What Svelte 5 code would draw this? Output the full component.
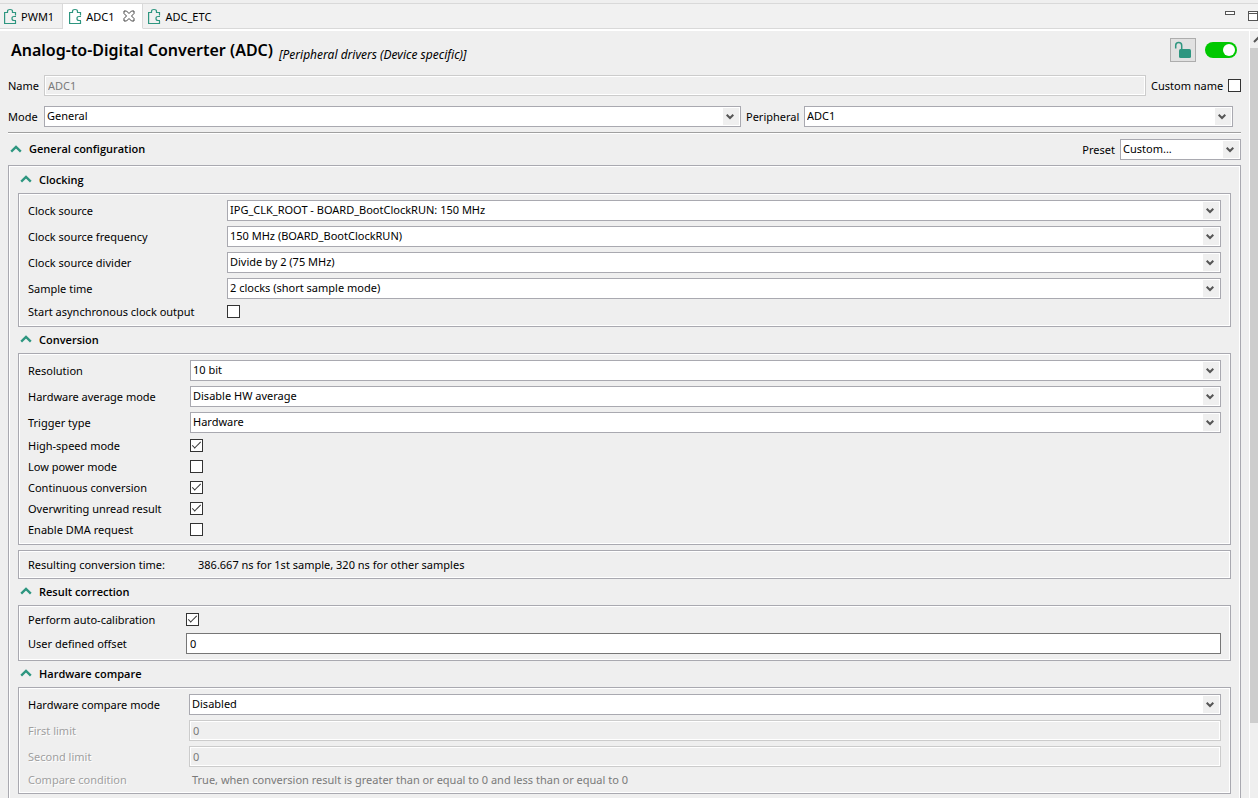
<script>
  let tabs = $state([
    { id: 'PWM1', label: 'PWM1' },
    { id: 'ADC1', label: 'ADC1' },
    { id: 'ADC_ETC', label: 'ADC_ETC' }
  ]);
  let activeTab = $state('ADC1');
  let enabled = $state(true);
  let customName = $state(false);

  const presets = ['Custom...'];

  let sections = $state([
    {
      title: 'Clocking',
      labelWidth: 199,
      open: true,
      rows: [
        { id: 'clock-source', label: 'Clock source', kind: 'select', value: 'IPG_CLK_ROOT - BOARD_BootClockRUN: 150 MHz' },
        { id: 'clock-freq', label: 'Clock source frequency', kind: 'select', value: '150 MHz (BOARD_BootClockRUN)' },
        { id: 'clock-div', label: 'Clock source divider', kind: 'select', value: 'Divide by 2 (75 MHz)' },
        { id: 'sample-time', label: 'Sample time', kind: 'select', value: '2 clocks (short sample mode)' },
        { id: 'async-out', label: 'Start asynchronous clock output', kind: 'check', value: false }
      ]
    },
    {
      title: 'Conversion',
      labelWidth: 162,
      open: true,
      rows: [
        { id: 'resolution', label: 'Resolution', kind: 'select', value: '10 bit' },
        { id: 'hw-average', label: 'Hardware average mode', kind: 'select', value: 'Disable HW average' },
        { id: 'trigger', label: 'Trigger type', kind: 'select', value: 'Hardware' },
        { id: 'high-speed', label: 'High-speed mode', kind: 'check', value: true },
        { id: 'low-power', label: 'Low power mode', kind: 'check', value: false },
        { id: 'continuous', label: 'Continuous conversion', kind: 'check', value: true },
        { id: 'overwrite', label: 'Overwriting unread result', kind: 'check', value: true },
        { id: 'dma', label: 'Enable DMA request', kind: 'check', value: false }
      ]
    },
    {
      labelWidth: 167,
      open: true,
      rows: [
        { id: 'conv-time', label: 'Resulting conversion time:', kind: 'text', value: '386.667 ns for 1st sample, 320 ns for other samples' }
      ]
    },
    {
      title: 'Result correction',
      labelWidth: 158,
      open: true,
      rows: [
        { id: 'auto-cal', label: 'Perform auto-calibration', kind: 'check', value: true },
        { id: 'offset', label: 'User defined offset', kind: 'input', value: '0' }
      ]
    },
    {
      title: 'Hardware compare',
      labelWidth: 161,
      open: true,
      rows: [
        { id: 'hw-compare', label: 'Hardware compare mode', kind: 'select', value: 'Disabled' },
        { id: 'limit-1', label: 'First limit', kind: 'input', value: '0', disabled: true },
        { id: 'limit-2', label: 'Second limit', kind: 'input', value: '0', disabled: true },
        { id: 'condition', label: 'Compare condition', kind: 'text', value: 'True, when conversion result is greater than or equal to 0 and less than or equal to 0', disabled: true }
      ]
    }
  ]);
  let generalOpen = $state(true);
</script>

{#snippet combo(id, value)}
  <div class="combo">
    <select {id}>
      <option>{value}</option>
    </select>
    <span class="combo-arrow">
      <svg width="8" height="6" viewBox="0 0 8 6"><path d="M0.7 0.7 4 4 7.3 0.7" fill="none" stroke="#555" stroke-width="2" /></svg>
    </span>
  </div>
{/snippet}

{#snippet chevron(open)}
  <svg class="chevron" class:closed={!open} width="12" height="8" viewBox="0 0 12 8"><path d="M1.2 6.6 6 2l4.8 4.6" fill="none" stroke="#2e9680" stroke-width="2.4" /></svg>
{/snippet}

<div class="editor">
  <div class="tabbar">
    <div class="tabs" role="tablist">
      {#each tabs as tab (tab.id)}
        <div class="tab" class:active={tab.id === activeTab}>
          <button class="tab-name" role="tab" aria-selected={tab.id === activeTab} onclick={() => (activeTab = tab.id)}>
            <svg width="13" height="17" viewBox="0 0 13 17" fill="none" stroke="#2e9680" stroke-width="1.2">
              <path d="M11.5 7.5V4.5H8.5V3.5q0-2-2.5-2t-2.5 2v1H.6v11h10.9v-2.5" />
              <path d="M12 8.5H10q-2 0-2 2t2 2h2" />
            </svg>
            <span>{tab.label}</span>
          </button>
          {#if tab.id === activeTab}
            <button class="tab-close" aria-label="Close tab">
              <svg width="12" height="12" viewBox="0 0 12 12" fill="#fff" stroke="#444"><path d="M1 1h2.5L6 3.5 8.5 1H11v2.5L8.500 6 11 8.5V11H8.5L6 8.5 3.5 11H1V8.5L3.5 6 1 3.5z" /></svg>
            </button>
          {/if}
        </div>
      {/each}
    </div>
    <div class="window-buttons">
      <button aria-label="Minimize">
        <svg width="10" height="10" viewBox="0 0 10 10" fill="#fff" stroke="#555"><rect x=".5" y=".5" width="9" height="3" /></svg>
      </button>
      <button aria-label="Maximize">
        <svg width="10" height="10" viewBox="0 0 10 10" fill="#fff" stroke="#555"><rect x=".5" y=".5" width="9" height="9" /><path d="M0 2.5h10" /></svg>
      </button>
    </div>
  </div>

  <div class="body">
    <main>
      <header>
        <h1>Analog-to-Digital Converter (ADC)</h1>
        <em>[Peripheral drivers (Device specific)]</em>
        <button class="lock" aria-label="Unlock">
          <svg width="18" height="18" viewBox="0 0 18 18"><path d="M1.7 7.5V4.5a3 3 0 0 1 6 0V8" fill="none" stroke="#2e9680" stroke-width="1.5" /><rect x="5" y="8" width="12" height="9" rx="1.5" fill="#2e9680" /></svg>
        </button>
        <label class="toggle">
          <input type="checkbox" aria-label="Enabled" bind:checked={enabled} />
        </label>
      </header>

      <div class="line">
        <label class="lead" for="name">Name</label>
        <input id="name" class="field" type="text" value="ADC1" disabled={!customName} />
        <label class="custom" for="custom-name">Custom name</label>
        <input id="custom-name" class="check" type="checkbox" bind:checked={customName} />
      </div>

      <div class="line mode">
        <label class="lead" for="mode">Mode</label>
        <div class="mode-combo">{@render combo('mode', 'General')}</div>
        <label class="peripheral" for="peripheral">Peripheral</label>
        <div class="peripheral-combo">{@render combo('peripheral', 'ADC1')}</div>
      </div>

      <hr />

      <div class="line general">
        <button class="heading" aria-expanded={generalOpen} onclick={() => (generalOpen = !generalOpen)}>
          {@render chevron(generalOpen)}
          General configuration
        </button>
        <label class="preset" for="preset">Preset</label>
        <div class="preset-combo">{@render combo('preset', presets[0])}</div>
      </div>

      {#if generalOpen}
        <div class="group outer">
          {#each sections as section}
            {#if section.title}
              <button class="heading" aria-expanded={section.open} onclick={() => (section.open = !section.open)}>
                {@render chevron(section.open)}
                {section.title}
              </button>
            {/if}
            {#if section.open}
              <div class="group" class:untitled={!section.title} style="--label-width: {section.labelWidth}px">
                {#each section.rows as row (row.id)}
                  <div class="row {row.kind}" class:disabled={row.disabled}>
                    {#if row.kind === 'text'}
                      <span class="name">{row.label}</span>
                      <output>{row.value}</output>
                    {:else}
                      <label class="name" for={row.id}>{row.label}</label>
                      {#if row.kind === 'select'}
                        {@render combo(row.id, row.value)}
                      {:else if row.kind === 'check'}
                        <input id={row.id} class="check" type="checkbox" bind:checked={row.value} />
                      {:else}
                        <input id={row.id} class="field" type="text" bind:value={row.value} disabled={row.disabled} />
                      {/if}
                    {/if}
                  </div>
                {/each}
              </div>
            {/if}
          {/each}
        </div>
      {/if}
    </main>

    <div class="scrollbar" aria-hidden="true">
      <svg width="16" height="17" viewBox="0 0 16 17"><path d="M4 11 8 7l4 4" fill="none" stroke="#555" stroke-width="2" /></svg>
      <div class="thumb"></div>
    </div>
  </div>
</div>

<style>
  :global(body) {
    margin: 0;
  }

  .editor {
    display: flex;
    flex-direction: column;
    height: 100vh;
    overflow: hidden;
    background: #efefef;
    color: #000;
    font: 11px/15px 'Noto Sans', 'Open Sans', sans-serif;
  }

  button,
  input,
  select {
    box-sizing: border-box;
    margin: 0;
    padding: 0;
    border: 0;
    border-radius: 0;
    background: none;
    color: inherit;
    font: inherit;
  }

  svg {
    display: block;
    flex-shrink: 0;
  }

  .tabbar {
    display: flex;
    flex: none;
    justify-content: space-between;
    margin-top: 3px;
    border-top: 1px solid #d9d9d9;
    border-bottom: 2px solid #fff;
    background: #f1f1f1;
    overflow: hidden;
  }

  .tabs {
    display: flex;
    flex: 1;
  }

  .tab {
    display: flex;
    align-items: center;
    gap: 9px;
    height: 24px;
    padding: 0 8px 0 5px;
    border-bottom: 1px solid #d9d9d9;
  }

  .tab:first-child {
    padding-left: 4px;
    border-right: 1px solid #d9d9d9;
  }

  .tab:last-child {
    flex: 1;
  }

  .tab.active {
    padding: 0 7px 0 6px;
    border-right: 1px solid #d9d9d9;
    border-bottom-color: #fff;
    background: #fff;
  }

  .tab-name {
    display: flex;
    align-items: center;
    gap: 4px;
  }

  .window-buttons {
    display: flex;
    align-items: flex-start;
    gap: 13px;
    height: 25px;
    padding-top: 7px;
    box-sizing: border-box;
    border-bottom: 1px solid #d9d9d9;
  }

  .body {
    display: flex;
    flex: 1;
    min-height: 0;
  }

  main {
    flex: 1;
    min-width: 0;
    padding: 0 8px;
    overflow: hidden;
  }

  header {
    display: flex;
    align-items: center;
    height: 38px;
    padding: 0 4px 0 3px;
  }

  h1 {
    margin: 0;
    font-size: 16px;
    font-weight: 600;
    line-height: 22px;
  }

  em {
    flex: 1;
    padding: 8px 0 0 6px;
    font-size: 12px;
  }

  .lock {
    display: grid;
    place-items: center;
    width: 26px;
    height: 24px;
    margin-right: 9px;
    border: 1px solid #adadad;
    background: #e1e1e1;
  }

  .toggle input {
    display: block;
    appearance: none;
    width: 32px;
    height: 16px;
    border-radius: 8px;
    background: #aaa;
  }

  .toggle input::before {
    content: '';
    display: block;
    width: 12px;
    height: 12px;
    margin: 2px;
    border-radius: 50%;
    background: #fff;
  }

  .toggle input:checked {
    background: #00c800;
  }

  .toggle input:checked::before {
    margin-left: 18px;
  }

  .line {
    display: flex;
    align-items: center;
    gap: 5px;
    margin-top: 6px;
  }

  .lead {
    width: 31px;
  }

  .custom {
    width: 72px;
    white-space: nowrap;
  }

  .mode {
    margin-top: 10px;
    padding-right: 8px;
  }

  .mode-combo {
    flex: 697;
  }

  .peripheral {
    width: 53px;
  }

  .peripheral-combo {
    flex: 429;
  }

  hr {
    height: 1px;
    margin: 5px 0;
    border: 0;
    border-top: 1px solid #a0a0a0;
    background: #fff;
  }

  .general {
    margin: 0 0 5px;
  }

  .preset {
    margin-left: auto;
  }

  .preset-combo {
    width: 121px;
  }

  .heading {
    display: flex;
    align-items: center;
    gap: 7px;
    padding: 0 2px 2px;
    font-family: 'Open Sans', 'Noto Sans', sans-serif;
    font-weight: 600;
  }

  .group {
    padding: 6px 9px;
    border: 1px solid #a9a9b0;
    box-shadow: inset 0 0 0 1px #fff;
  }

  .group .heading {
    height: 26px;
  }

  .group.outer {
    padding: 1px 9px 9px;
  }

  .untitled {
    margin-top: 5px;
  }

  .row {
    display: flex;
    align-items: center;
  }

  .row + .row {
    margin-top: 5px;
  }

  .row.check {
    padding-bottom: 1px;
  }

  .name {
    flex: none;
    width: var(--label-width);
    white-space: nowrap;
  }

  .row.disabled {
    color: #7a7a7a;
  }

  .disabled .name {
    color: #a0a0a0;
    text-shadow: 1px 1px #fff;
  }

  output {
    padding-left: 3px;
  }

  .combo {
    position: relative;
    flex: 1;
  }

  .combo select {
    appearance: none;
    display: block;
    width: 100%;
    height: 21px;
    padding: 0 20px 2px 2px;
    border: 1px solid #a9a9b0;
    background: #fff;
  }

  .combo-arrow {
    position: absolute;
    top: 2px;
    right: 2px;
    bottom: 2px;
    display: flex;
    align-items: center;
    box-sizing: border-box;
    width: 16px;
    padding-left: 3px;
    background: #efefef;
    pointer-events: none;
  }

  .field {
    flex: 1;
    min-width: 0;
    height: 21px;
    padding: 0 3px;
    border: 1px solid #767676;
    background: #fff;
  }

  .field:disabled {
    border-color: #ccc;
    background: #efefef;
    box-shadow: inset 0 0 0 1px #fff;
    color: #7a7a7a;
  }

  input.check {
    appearance: none;
    display: grid;
    place-items: center;
    width: 13px;
    height: 13px;
    border: 1px solid #333;
    background: #fff;
  }

  input.check:checked::before {
    content: '';
    width: 8px;
    height: 3px;
    margin-bottom: 3px;
    border-bottom: 1px solid #333;
    border-left: 1px solid #333;
    transform: rotate(-45deg);
  }

  .chevron.closed {
    transform: rotate(180deg);
  }

  .scrollbar {
    width: 8px;
    border-left: 1px solid #fff;
    overflow: hidden;
  }

  .thumb {
    height: 88%;
    background: #cdcdcd;
  }
</style>
